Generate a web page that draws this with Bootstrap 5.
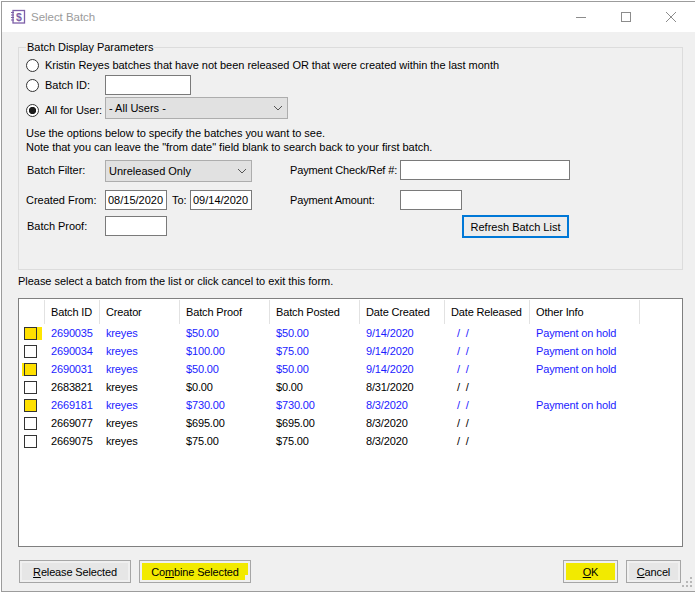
<!DOCTYPE html>
<html lang="en">
<head>
<meta charset="utf-8">
<title>Select Batch</title>
<link href="https://cdn.jsdelivr.net/npm/bootstrap@5.3.0/dist/css/bootstrap.min.css" rel="stylesheet">
<style>
html,body{height:100%;}
body{margin:0;padding:1px 1px 1px 1px;background:#fff;font-family:"Liberation Sans",Arial,sans-serif;font-size:11px;line-height:14px;letter-spacing:-.03px;color:#000;overflow:hidden;}
.win{position:relative;width:694px;height:591px;border:1px solid #9c9c9c;border-right:0;background:#f0f0f0;display:flex;flex-direction:column;}
.titlebar{height:30px;flex:none;background:#fff;padding-left:8px;color:#9b9b9b;font-size:11.5px;}
.titlebar .ttl{margin-left:5px;margin-top:-1px;}
.wbtn{stroke:#8c8c8c;fill:none;flex:none;}
.wbtns{gap:35px;padding-right:19px;}
.inner{padding:8px 11px 0 16px;flex:1;display:flex;flex-direction:column;min-height:0;}
.group{border:1px solid #dcdcdc;margin:0;padding:1px 7px 0 7px;width:665px;height:230px;min-width:0;flex:none;}
.group legend{float:none;width:auto;margin:0;padding:0 1px;font-size:11px;line-height:14px;}
.rw1{height:20px;}
.rw2{height:20px;margin-bottom:2px;}
.rw3{height:22px;}
.rd{width:13px;height:13px;margin:0 6px 0 0;flex:none;border:1px solid #333;background:#fff;}
.rd:checked{background:radial-gradient(circle,#1a1a1a 0 3.4px,#fff 3.9px);border-color:#333;}
.rd:focus{box-shadow:none;border-color:#333;}
.rw3 .rd{margin-top:4px;}
.rw3 .lblr{margin-top:4px;}
.lblr{width:60px;flex:none;}
.ebox{height:20px;border:1px solid #7a7a7a;background:#fff;border-radius:0;padding:0 2px;font-size:11px;line-height:18px;color:#000;font-family:inherit;}
.ebox:focus{box-shadow:none;border-color:#7a7a7a;}
.w86{width:86px;flex:none;}
.w62{width:62px;flex:none;}
.w170{width:170px;flex:none;}
.w147{width:147px;flex:none;}
.w183{width:183px;flex:none;}
.dd{height:22px;border:1px solid #adadad;border-radius:0;background-color:#e1e1e1;background-image:url("data:image/svg+xml,%3csvg xmlns='http://www.w3.org/2000/svg' width='10' height='6'%3e%3cpath d='M1 1l4 4 4-4' fill='none' stroke='%23555'/%3e%3c/svg%3e");background-position:right 4px center;background-size:10px 6px;background-repeat:no-repeat;padding:0 0 0 3px;font-size:11px;line-height:20px;font-family:inherit;color:#000;}
.dd:focus{box-shadow:none;border-color:#adadad;}
.notes{margin-top:7px;height:34px;}
.lft{width:226px;flex:none;}
.mid{width:38px;flex:none;}
.lblf{width:79px;flex:none;padding-left:1px;padding-top:3px;}
.lbl0{padding-left:0;}
.to{width:23px;flex:none;padding-left:5px;padding-top:3px;}
.lblp{width:110px;flex:none;white-space:nowrap;padding-top:3px;letter-spacing:-.15px;}
.frow1{height:30px;}
.frow2{height:26px;}
.frow3{height:24px;}
.refresh{width:107px;height:23px;margin:-1px 0 0 0;padding:0;border:2px solid #0078d7;border-radius:0;background:#ececec;color:#000;font-size:11px;line-height:14px;font-family:inherit;}
.refresh:hover{background:#ececec;color:#000;border-color:#0078d7;}
.hint{height:28px;padding:4px 0 0 0;margin:0;flex:none;}
.lst{width:665px;height:249px;flex:none;background:#fff;border:1px solid #7f7f7f;overflow:hidden;}
.grid{table-layout:fixed;width:621px;margin:0;border-collapse:separate;border-spacing:0;--bs-table-bg:transparent;background:transparent;letter-spacing:-.15px;}
.c0{width:26px;}.c1{width:55px;}.c2{width:80px;}.c3,.c4{width:90px;}.c5,.c6{width:85px;}.c7{width:110px;}
.grid th{font-weight:400;height:25px;padding:0 0 0 6px;vertical-align:middle;background:linear-gradient(#e2e2e2,#e2e2e2) right 1px/1px 24px no-repeat;color:#000;border:0;}
.grid td{height:18px;padding:0 0 0 6px;vertical-align:middle;color:#000;border:0;white-space:nowrap;line-height:14px;}
.grid tr.on td{color:#1c1cff;}
.grid td.sl{padding-left:12px;white-space:pre;}
.grid td.ck{padding:0 0 0 5px;}
.grid .cb{display:block;width:13px;height:13px;margin:0;border:1px solid #333;border-radius:0;background:#fff;}
.grid .cb:focus{box-shadow:none;border-color:#333;}
.grid .cb.ye{background:#ffe000;}
.grid .ext-r{box-shadow:5px 0 0 #ffe600;}
.grid .ext-l{box-shadow:-2px 0 0 #ffe600;}
.foot{height:46px;flex:none;padding:13px 3px 0 1px;}
.wb{height:23px;padding:0;border:1px solid #a6a6a6;border-radius:0;background:#e6e6e6;box-shadow:inset 0 0 0 2px #f0f0f0;color:#000;font-size:11px;line-height:14px;font-family:inherit;letter-spacing:-.15px;}
.wb:hover{background:#e6e6e6;color:#000;border-color:#a6a6a6;}
.w112{width:112px;}
.w55{width:55px;}
.hl,.hl:hover{background:#f2ea00;box-shadow:inset 0 0 0 2px #f0f0f0;}
.notch,.notch:hover{background:linear-gradient(#f0f0f0,#f0f0f0) right 0 bottom 0/5px 7px no-repeat,#f2ea00;}
.grip{position:absolute;right:1px;bottom:2px;}
</style>
</head>
<body>
<div class="win">
  <div class="titlebar d-flex align-items-center">
    <svg width="16" height="16" viewBox="0 0 16 16">
      <rect x="3" y="1.5" width="11.5" height="12.5" fill="#fff" stroke="#7d5fa8" stroke-width="1.3"/>
      <path d="M1 3.5h3M1 6h3M1 8.5h3M1 11h3" stroke="#7d5fa8" stroke-width="1.2"/>
      <text x="8.8" y="11.6" text-anchor="middle" font-family="Liberation Sans" font-weight="700" font-size="10.5" fill="#7d5fa8">$</text>
    </svg>
    <span class="ttl">Select Batch</span>
    <div class="ms-auto d-flex align-items-center wbtns">
      <svg class="wbtn" width="10" height="10" viewBox="0 0 10 10"><path d="M0 5.5h10"/></svg>
      <svg class="wbtn" width="10" height="10" viewBox="0 0 10 10"><rect x=".5" y=".5" width="9" height="9"/></svg>
      <svg class="wbtn" width="10" height="10" viewBox="0 0 10 10"><path d="M0 0l10 10M10 0L0 10"/></svg>
    </div>
  </div>
  <div class="inner">
    <fieldset class="group">
      <legend>Batch Display Parameters</legend>
      <div class="rw1 d-flex align-items-center"><input class="form-check-input rd" type="radio" name="scope"><span>Kristin Reyes batches that have not been released OR that were created within the last month</span></div>
      <div class="rw2 d-flex align-items-center"><input class="form-check-input rd" type="radio" name="scope"><span class="lblr">Batch ID:</span><input class="form-control ebox w86" type="text"></div>
      <div class="rw3 d-flex align-items-center"><input class="form-check-input rd" type="radio" name="scope" checked><span class="lblr">All for User:</span><select class="form-select dd w183"><option>- All Users -</option></select></div>
      <div class="notes">Use the options below to specify the batches you want to see.<br>Note that you can leave the "from date" field blank to search back to your first batch.</div>
      <div class="frow1 d-flex">
        <div class="lft d-flex"><span class="lblf">Batch Filter:</span><select class="form-select dd w147"><option>Unreleased Only</option></select></div>
        <div class="mid"></div>
        <div class="d-flex"><span class="lblp">Payment Check/Ref #:</span><input class="form-control ebox w170" type="text"></div>
      </div>
      <div class="frow2 d-flex">
        <div class="lft d-flex"><span class="lblf lbl0">Created From:</span><input class="form-control ebox w62" type="text" value="08/15/2020"><span class="to">To:</span><input class="form-control ebox w62" type="text" value="09/14/2020"></div>
        <div class="mid"></div>
        <div class="d-flex"><span class="lblp">Payment Amount:</span><input class="form-control ebox w62" type="text"></div>
      </div>
      <div class="frow3 d-flex">
        <div class="lft d-flex"><span class="lblf">Batch Proof:</span><input class="form-control ebox w62" type="text"></div>
        <div class="mid"></div>
        <div class="d-flex"><span class="lblp"></span><span class="w62"></span><button class="btn refresh" type="button">Refresh Batch List</button></div>
      </div>
    </fieldset>
    <p class="hint">Please select a batch from the list or click cancel to exit this form.</p>
    <div class="lst">
      <table class="table grid">
        <colgroup><col class="c0"><col class="c1"><col class="c2"><col class="c3"><col class="c4"><col class="c5"><col class="c6"><col class="c7"></colgroup>
        <thead><tr><th></th><th>Batch ID</th><th>Creator</th><th>Batch Proof</th><th>Batch Posted</th><th>Date Created</th><th>Date Released</th><th>Other Info</th></tr></thead>
        <tbody>
          <tr class="on"><td class="ck"><input class="form-check-input cb ye ext-r" type="checkbox"></td><td>2690035</td><td>kreyes</td><td>$50.00</td><td>$50.00</td><td>9/14/2020</td><td class="sl">/  /</td><td>Payment on hold</td></tr>
          <tr class="on"><td class="ck"><input class="form-check-input cb" type="checkbox"></td><td>2690034</td><td>kreyes</td><td>$100.00</td><td>$75.00</td><td>9/14/2020</td><td class="sl">/  /</td><td>Payment on hold</td></tr>
          <tr class="on"><td class="ck"><input class="form-check-input cb ye ext-l" type="checkbox"></td><td>2690031</td><td>kreyes</td><td>$50.00</td><td>$50.00</td><td>9/14/2020</td><td class="sl">/  /</td><td>Payment on hold</td></tr>
          <tr><td class="ck"><input class="form-check-input cb" type="checkbox"></td><td>2683821</td><td>kreyes</td><td>$0.00</td><td>$0.00</td><td>8/31/2020</td><td class="sl">/  /</td><td></td></tr>
          <tr class="on"><td class="ck"><input class="form-check-input cb ye" type="checkbox"></td><td>2669181</td><td>kreyes</td><td>$730.00</td><td>$730.00</td><td>8/3/2020</td><td class="sl">/  /</td><td>Payment on hold</td></tr>
          <tr><td class="ck"><input class="form-check-input cb" type="checkbox"></td><td>2669077</td><td>kreyes</td><td>$695.00</td><td>$695.00</td><td>8/3/2020</td><td class="sl">/  /</td><td></td></tr>
          <tr><td class="ck"><input class="form-check-input cb" type="checkbox"></td><td>2669075</td><td>kreyes</td><td>$75.00</td><td>$75.00</td><td>8/3/2020</td><td class="sl">/  /</td><td></td></tr>
        </tbody>
      </table>
    </div>
    <div class="foot d-flex">
      <button class="btn wb w112 me-2" type="button"><u>R</u>elease Selected</button>
      <button class="btn wb w112 hl notch" type="button">Co<u>m</u>bine Selected</button>
      <button class="btn wb w55 hl ms-auto" type="button"><u>O</u>K</button>
      <button class="btn wb w55 ms-2" type="button"><u>C</u>ancel</button>
    </div>
  </div>
  <svg class="grip" width="12" height="12" viewBox="0 0 12 12" fill="#b8b8b8"><rect x="8" y="0" width="2" height="2"/><rect x="4" y="4" width="2" height="2"/><rect x="8" y="4" width="2" height="2"/><rect x="0" y="8" width="2" height="2"/><rect x="4" y="8" width="2" height="2"/><rect x="8" y="8" width="2" height="2"/></svg>
</div>
<script src="https://cdn.jsdelivr.net/npm/bootstrap@5.3.0/dist/js/bootstrap.bundle.min.js"></script>
</body>
</html>
